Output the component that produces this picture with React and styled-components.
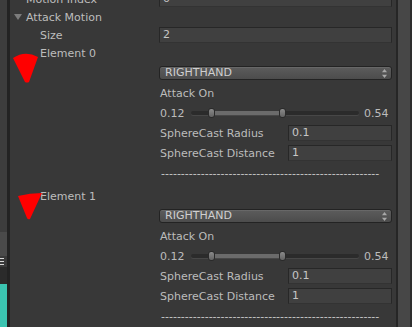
import React from "react";
import styled, { createGlobalStyle } from "styled-components";

const Global = createGlobalStyle`
  html, body { margin: 0; padding: 0; background: #383838; overflow: hidden; }
  body { font-family: "DejaVu Sans", Verdana, sans-serif; font-size: 11px; color: #bcbcbc; }
`;

const Frame = styled.div`
  display: flex;
  width: 412px;
  height: 327px;
  overflow: hidden;
`;

const LeftDock = styled.div`
  width: 7px;
  display: flex;
  flex-direction: column;
`;

const DockPart = styled.div`
  height: ${(p) => (p.$h ? `${p.$h}px` : "auto")};
  flex: ${(p) => (p.$h ? "none" : "1")};
  background: ${(p) => p.$bg};
  display: flex;
  flex-direction: column;
  justify-content: center;
  gap: 2px;
`;

const DockLine = styled.div`
  width: 4px;
  height: 1px;
  background: #d8d8d8;
`;

const Split = styled.div`
  width: ${(p) => p.$w}px;
  background: ${(p) => p.$bg};
`;

const Panel = styled.div`
  position: relative;
  flex: 1;
  background: #383838;
  overflow: hidden;
`;

const Content = styled.div`
  display: flex;
  flex-direction: column;
  margin-top: -10px;
  padding-right: 4px;
`;

const PropRow = styled.div`
  display: grid;
  grid-template-columns: 149px 1fr;
  align-items: center;
  height: ${(p) => p.$h || 18}px;
`;

const Label = styled.div`
  display: flex;
  align-items: center;
  gap: 4px;
  padding-left: ${(p) => p.$indent || 0}px;
  white-space: nowrap;
  color: #bdbdbd;
`;

const Fold = styled.span`
  width: 0;
  height: 0;
  border-left: 4px solid transparent;
  border-right: 4px solid transparent;
  border-top: 6px solid #7c7c7c;
`;

const Field = styled.div`
  height: 16px;
  box-sizing: border-box;
  background: #404040;
  border: 1px solid #272727;
  border-bottom-color: #333;
  padding-left: 3px;
  line-height: 14px;
  color: #c6c6c6;
`;

const ElementBlock = styled.div`
  display: flex;
  flex-direction: column;
  margin-bottom: ${(p) => p.$mb || 0}px;
`;

const ElementHeader = styled.div`
  height: 19px;
  display: flex;
  align-items: center;
  padding-left: 30px;
  color: #bdbdbd;
`;

const Inner = styled.div`
  padding-left: 149px;
  height: 20px;
  display: flex;
  align-items: center;
`;

const Popup = styled.div`
  flex: 1;
  height: 14px;
  box-sizing: border-box;
  border: 1px solid #232323;
  border-radius: 3px;
  background: linear-gradient(#5c5c5c, #4c4c4c);
  box-shadow: inset 0 1px 0 rgba(255, 255, 255, 0.08);
  display: flex;
  align-items: center;
  justify-content: space-between;
  padding: 0 4px 0 5px;
  color: #cfcfcf;
  line-height: 12px;
`;

const InnerLabel = styled.div`
  padding-left: 1px;
  white-space: nowrap;
`;

const SliderGrid = styled.div`
  flex: 1;
  display: grid;
  grid-template-columns: 32px 1fr 33px;
  align-items: center;
`;

const Track = styled.div`
  position: relative;
  height: 4px;
  border-radius: 2px;
  background: #2b2b2b;
  box-shadow: 0 1px 0 #474747;
`;

const Range = styled.div`
  position: absolute;
  top: 0;
  height: 4px;
  background: #6b6b6b;
`;

const Thumb = styled.div`
  position: absolute;
  top: -3px;
  width: 7px;
  height: 10px;
  margin-left: -3px;
  box-sizing: border-box;
  border-radius: 3px;
  border: 1px solid #2a2a2a;
  background: linear-gradient(#8a8a8a, #636363);
`;

const MaxLabel = styled.div`
  padding-left: 5px;
`;

const SphereRow = styled.div`
  flex: 1;
  display: grid;
  grid-template-columns: 129px 1fr;
  align-items: center;
`;

const Dashes = styled.div`
  padding-left: 2px;
  color: #c9c9c9;
  white-space: nowrap;
  overflow: hidden;
  width: 220px;
`;

const Mark = styled.svg`
  position: absolute;
  left: ${(p) => p.$x}px;
  top: ${(p) => p.$y}px;
`;

const ScrollTrack = styled.div`
  width: 12px;
  background: #474747;
`;

function Arrows() {
  return (
    <svg width="5" height="9" viewBox="0 0 5 9">
      <path d="M2.5 0 L5 3.3 L0 3.3 Z" fill="#a9a9a9" />
      <path d="M0 5.7 L5 5.7 L2.5 9 Z" fill="#a9a9a9" />
    </svg>
  );
}

function Element({ index, mb }) {
  const min = 0.12;
  const max = 0.54;
  return (
    <ElementBlock $mb={mb}>
      <ElementHeader>Element {index}</ElementHeader>
      <Inner>
        <Popup>
          <span>RIGHTHAND</span>
          <Arrows />
        </Popup>
      </Inner>
      <Inner>
        <InnerLabel>Attack On</InnerLabel>
      </Inner>
      <Inner>
        <SliderGrid>
          <InnerLabel>{min}</InnerLabel>
          <Track>
            <Range style={{ left: `${min * 100}%`, width: `${(max - min) * 100}%` }} />
            <Thumb style={{ left: `${min * 100}%` }} />
            <Thumb style={{ left: `${max * 100}%` }} />
          </Track>
          <MaxLabel>{max}</MaxLabel>
        </SliderGrid>
      </Inner>
      <Inner>
        <SphereRow>
          <InnerLabel>SphereCast Radius</InnerLabel>
          <Field>0.1</Field>
        </SphereRow>
      </Inner>
      <Inner>
        <SphereRow>
          <InnerLabel>SphereCast Distance</InnerLabel>
          <Field>1</Field>
        </SphereRow>
      </Inner>
      <Inner>
        <Dashes>{"-".repeat(55)}</Dashes>
      </Inner>
    </ElementBlock>
  );
}

export default function App() {
  return (
    <>
      <Global />
      <Frame>
        <LeftDock>
          <DockPart $bg="#3d3d3d" />
          <DockPart $h={24} $bg="#4a4a4a" />
          <DockPart $h={11} $bg="#3a3a3a">
            <DockLine />
            <DockLine />
            <DockLine />
          </DockPart>
          <DockPart $h={17} $bg="#2b2b2b" />
          <DockPart $h={43} $bg="#3bc4b1" />
        </LeftDock>
        <Split $w={3} $bg="#232323" />
        <Panel>
          <Content>
            <PropRow>
              <Label $indent={16}>Motion Index</Label>
              <Field>0</Field>
            </PropRow>
            <PropRow>
              <Label $indent={4}>
                <Fold />
                Attack Motion
              </Label>
            </PropRow>
            <PropRow>
              <Label $indent={30}>Size</Label>
              <Field>2</Field>
            </PropRow>
            <Element index={0} mb={4} />
            <Element index={1} />
          </Content>
          <Mark $x={3} $y={52} width="26" height="31" viewBox="0 0 26 31">
            <path d="M0 6 Q12 -2 25 5 L16 30 Q14 31 12 30 Z" fill="#ff0000" />
          </Mark>
          <Mark $x={8} $y={192} width="25" height="28" viewBox="0 0 25 28">
            <path d="M0 4 Q12 1 24 1 L12 27 Q10 28 9 26 Z" fill="#ff0000" />
          </Mark>
        </Panel>
        <Split $w={2} $bg="#262626" />
        <ScrollTrack />
        <Split $w={2} $bg="#2e2e2e" />
      </Frame>
    </>
  );
}
